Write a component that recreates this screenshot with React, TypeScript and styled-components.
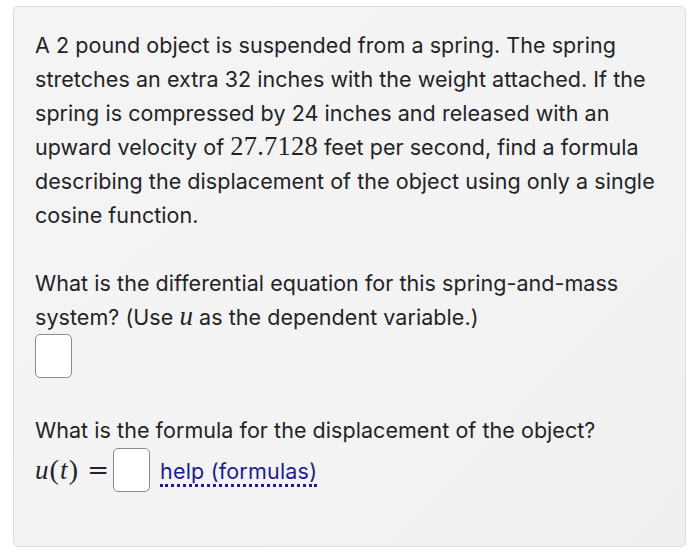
import React from 'react';
import styled, { createGlobalStyle } from 'styled-components';

const GlobalStyle = createGlobalStyle`
	html, body {
		margin: 0;
		padding: 0;
		background: #ffffff;
	}
	body {
		font-family: Inter, "Liberation Sans", Arial, sans-serif;
		color: #232325;
	}
`;

const Page = styled.div`
	width: 700px;
	height: 560px;
	padding: 6px 14px 0 13px;
	box-sizing: border-box;
`;

const Panel = styled.div`
	height: 541px;
	box-sizing: border-box;
	background: linear-gradient(135deg, #f4f4f5 0%, #f3f3f4 60%, #efeff0 100%);
	border: 1px solid #dcdcde;
	border-radius: 5px;
	padding: 21px 14px 0 21px;
	font-size: 21.5px;
	line-height: 34px;
	letter-spacing: 0.05px;
`;

const Paragraph = styled.p<{ top?: number; gap?: number }>`
	margin: ${(p) => p.top ?? 0}px 0 ${(p) => p.gap ?? 0}px;
`;

const MathNum = styled.span`
	font-family: "Liberation Serif", "DejaVu Serif", serif;
	font-size: 26.5px;
	line-height: 20px;
	letter-spacing: 0.2px;
`;

const MathVar = styled.span`
	font-family: "Liberation Serif", "DejaVu Serif", serif;
	font-style: italic;
	font-size: 27px;
	line-height: 20px;
`;

const Paren = styled(MathNum)`
	font-size: 28px;
	margin: 0 1px;
`;

const AnswerBox = styled.span`
	display: inline-block;
	width: 37px;
	height: 44px;
	box-sizing: border-box;
	background: #ffffff;
	border: 1.5px solid #8c8c8e;
	border-radius: 5px;
`;

const BoxRow = styled.div`
	display: flex;
	align-items: center;
	height: 44px;
`;

const FormulaRow = styled.div`
	display: flex;
	align-items: center;
	height: 44px;
	margin-top: 1px;
`;

const Equals = styled.span`
	font-family: "DejaVu Serif", "Liberation Serif", serif;
	font-size: 26px;
	line-height: 20px;
	margin: 0 4px 0 8px;
`;

const HelpLink = styled.a`
	color: #1b1c8e;
	text-decoration: none;
	margin-left: 10px;
	border-bottom: 3px dotted #1b1c8e;
	line-height: 24px;
	margin-top: 6px;
	padding-bottom: 1px;
	letter-spacing: 0.2px;
`;

const App: React.FC = () => (
	<>
		<GlobalStyle />
		<Page>
			<Panel>
				<Paragraph gap={34}>
					A 2 pound object is suspended from a spring. The spring stretches an extra 32 inches with
					the weight attached. If the spring is compressed by 24 inches and released with an upward
					velocity of <MathNum>27.7128</MathNum> feet per second, find a formula describing the
					displacement of the object using only a single cosine function.
				</Paragraph>
				<Paragraph>
					What is the differential equation for this spring-and-mass system? (Use{' '}
					<MathVar>u</MathVar> as the dependent variable.)
				</Paragraph>
				<BoxRow>
					<AnswerBox />
				</BoxRow>
				<Paragraph top={35}>What is the formula for the displacement of the object?</Paragraph>
				<FormulaRow>
					<MathVar>u</MathVar>
					<Paren>(</Paren>
					<MathVar>t</MathVar>
					<Paren>)</Paren>
					<Equals>=</Equals>
					<AnswerBox />
					<HelpLink href="#">help (formulas)</HelpLink>
				</FormulaRow>
			</Panel>
		</Page>
	</>
);

export default App;
